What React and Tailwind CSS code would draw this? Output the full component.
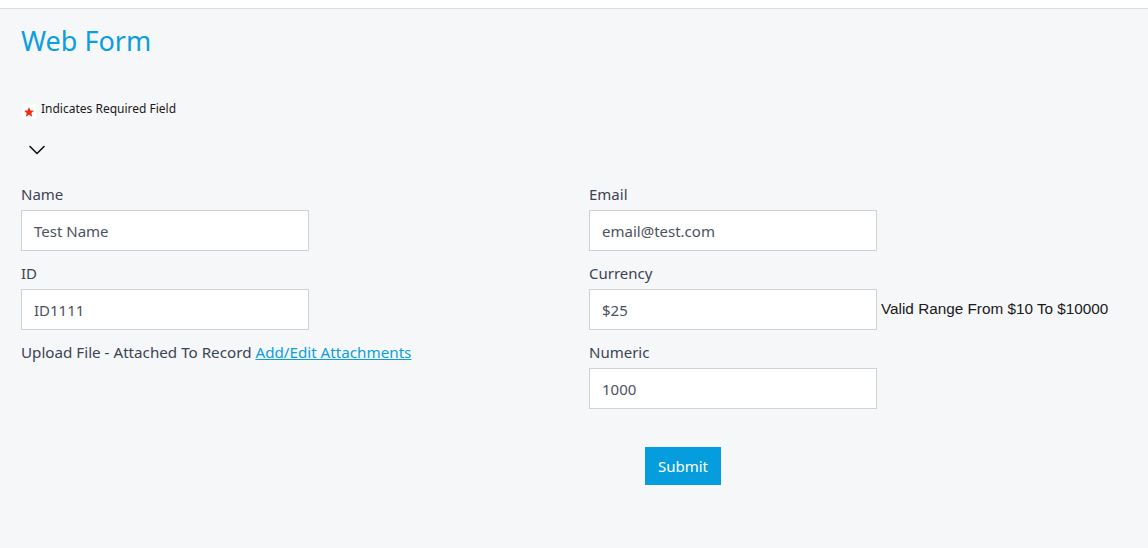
import React from "react";
import { ChevronDown } from "lucide-react";

const Field = ({ label, value, note }) => (
  <div className="flex flex-col">
    <label className="text-[15px] leading-6 text-[#3b4452] mb-[4px]">{label}</label>
    <div className="flex items-center">
      <input
        readOnly
        value={value}
        className="w-[288px] h-[41px] bg-white border border-[#cfd3d8] px-[12px] text-[15px] text-[#4a5260] outline-none"
      />
      {note && (
        <span className="ml-[4px] text-[15.3px] text-[#1a1a1a] font-['Liberation_Sans',sans-serif]">
          {note}
        </span>
      )}
    </div>
  </div>
);

export default function App() {
  return (
    <div className="min-h-screen bg-white font-['Noto_Sans','Open_Sans',sans-serif]">
      <div className="h-[8px] bg-white" />
      <div className="min-h-[540px] bg-[#f6f7f9] border-t border-[#dcdde0] pl-[21px] pt-[14px]">
        <h1 className="text-[27px] leading-[36px] text-[#0b9ee0]">Web Form</h1>

        <div className="mt-[43px] flex items-start">
          <span className="mt-[2px] ml-[1px] w-[14px] h-[15px] bg-white flex items-end justify-center pb-[1px]">
            <svg viewBox="0 0 24 24" className="w-[12px] h-[12px]" fill="#f52a12">
              <path d="M12 2l2.9 6.9 7.1.6-5.4 4.7 1.7 7.3L12 17.6 5.7 21.5l1.7-7.3L2 9.5l7.1-.6z" />
            </svg>
          </span>
          <span className="ml-[5px] text-[12px] leading-[14px] text-[#1a1a1a]">Indicates Required Field</span>
        </div>

        <div className="mt-[23px] ml-[2px] h-[16px] flex items-center">
          <ChevronDown size={28} strokeWidth={1.4} className="text-[#111] -my-[6px]" />
        </div>

        <div className="mt-[24px] grid grid-cols-[568px_1fr]">
          <div className="flex flex-col gap-[10px]">
            <Field label="Name" value="Test Name" />
            <Field label="ID" value="ID1111" />
            <div className="text-[15.2px] leading-6 text-[#3b4452]">
              Upload File - Attached To Record{" "}
              <a href="#" className="text-[#0b9ee0] underline">Add/Edit Attachments</a>
            </div>
          </div>
          <div className="flex flex-col gap-[10px]">
            <Field label="Email" value="email@test.com" />
            <Field label="Currency" value="$25" note="Valid Range From $10 To $10000" />
            <Field label="Numeric" value="1000" />
          </div>
        </div>

        <div className="mt-[38px] pl-[624px]">
          <button className="w-[76px] h-[38px] bg-[#069ddf] text-white text-[15px]">Submit</button>
        </div>
      </div>
    </div>
  );
}
